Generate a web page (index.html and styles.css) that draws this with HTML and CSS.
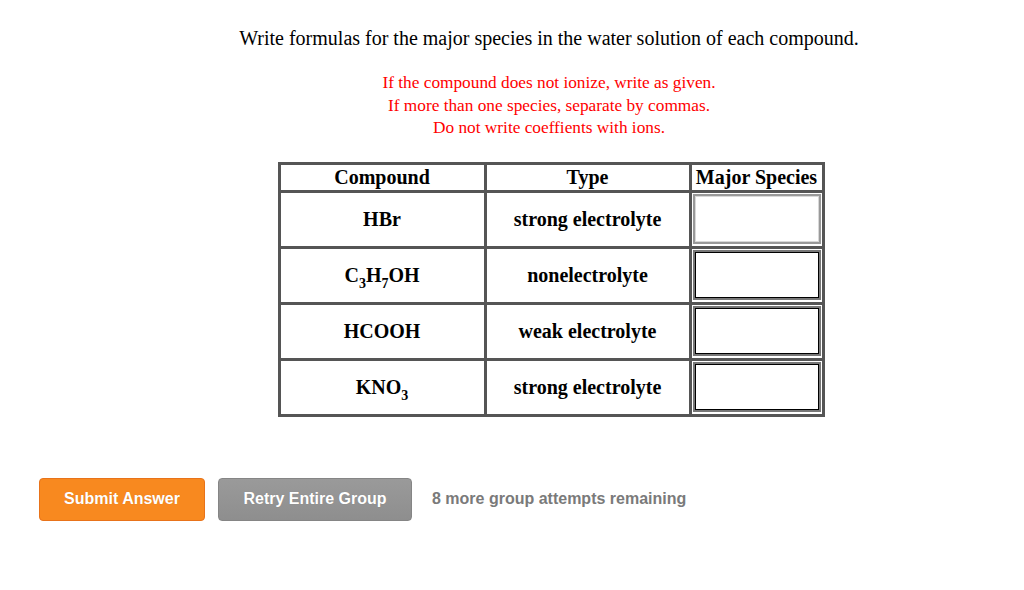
FILE: index.html
```html
<!DOCTYPE html>
<html>
<head>
<meta charset="utf-8">
<link rel="stylesheet" href="styles.css">
</head>
<body>
<div class="content">
  <p class="title">Write formulas for the major species in the water solution of each compound.</p>
  <div class="notes">
    <div>If the compound does not ionize, write as given.</div>
    <div>If more than one species, separate by commas.</div>
    <div>Do not write coeffients with ions.</div>
  </div>
  <table class="grid">
    <tr class="head">
      <th class="c1">Compound</th>
      <th class="c2">Type</th>
      <th class="c3">Major Species</th>
    </tr>
    <tr>
      <td>HBr</td>
      <td>strong electrolyte</td>
      <td class="inp"><div class="box first"></div></td>
    </tr>
    <tr>
      <td>C<sub>3</sub>H<sub>7</sub>OH</td>
      <td>nonelectrolyte</td>
      <td class="inp"><div class="box"></div></td>
    </tr>
    <tr>
      <td>HCOOH</td>
      <td>weak electrolyte</td>
      <td class="inp"><div class="box"></div></td>
    </tr>
    <tr>
      <td>KNO<sub>3</sub></td>
      <td>strong electrolyte</td>
      <td class="inp"><div class="box"></div></td>
    </tr>
  </table>
</div>
<div class="actions">
  <button class="btn submit">Submit Answer</button>
  <button class="btn retry">Retry Entire Group</button>
  <span class="remain">8 more group attempts remaining</span>
</div>
</body>
</html>
```

FILE: styles.css
```css
html, body {
  margin: 0;
  padding: 0;
  background: #fff;
}
body {
  width: 1024px;
  height: 590px;
  overflow: hidden;
  font-family: "Liberation Serif", "Times New Roman", serif;
}
.content {
  padding-left: 78px;
  padding-top: 26px;
  text-align: center;
}
.title {
  margin: 0 0 0 -4px;
  font-size: 20px;
  line-height: 24px;
  color: #000;
}
.notes {
  margin: 22px 0 0 -4px;
  color: #ff0000;
  font-size: 17.3px;
  line-height: 22.5px;
}
.grid {
  margin: 22px auto 0;
  border-collapse: collapse;
  border: 3px solid #555;
}
.grid th, .grid td {
  border: 3px solid #555;
  font-weight: bold;
  font-size: 20px;
  text-align: center;
  padding: 0;
  color: #000;
}
.grid th {
  height: 25px;
  line-height: 25px;
}
.grid td {
  height: 53px;
}
.c1 { width: 203px; }
.c2 { width: 202px; }
.c3 { width: 130px; }
.grid sub {
  font-size: 14px;
  vertical-align: -6px;
  line-height: 0;
}
.grid td.inp {
  padding: 0 1px;
}
.box {
  height: 46px;
  border: 2px solid #777;
  box-shadow: inset 0 0 0 1px #000;
  background: #fff;
}
.box.first {
  border-color: #999;
  box-shadow: inset 0 0 0 1px #d8d8d8;
}
.actions {
  display: flex;
  align-items: center;
  margin-top: 61px;
  padding-left: 39px;
  font-family: "Liberation Sans", Arial, sans-serif;
}
.btn {
  height: 43px;
  border-radius: 4px;
  font-family: "Liberation Sans", Arial, sans-serif;
  font-weight: bold;
  font-size: 16px;
  color: #fff;
  padding: 0;
  text-shadow: 0 0 1px rgba(0,0,0,0.15);
}
.submit {
  width: 166px;
  background: #f8891f;
  border: 1px solid #e8731a;
}
.retry {
  width: 194px;
  margin-left: 13px;
  background: linear-gradient(#9a9a9a, #8e8e8e);
  border: 1px solid #858585;
}
.remain {
  margin-left: 20px;
  font-size: 16px;
  font-weight: bold;
  color: #7a7a7a;
}
```
